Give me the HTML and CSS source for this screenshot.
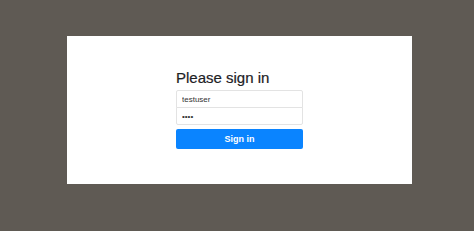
FILE: index.html
```html
<!DOCTYPE html>
<html lang="en">
<head>
    <meta charset="UTF-8">
    <title>Please sign in</title>
    <link rel="stylesheet" href="styles.css">
</head>
<body>
    <div class="panel">
        <form class="form-signin">
            <h2 class="form-heading">Please sign in</h2>
            <input type="text" class="form-input first" value="testuser">
            <input type="password" class="form-input last" value="test">
            <button type="button" class="btn-signin">Sign in</button>
        </form>
    </div>
</body>
</html>
```

FILE: styles.css
```css
* {
    margin: 0;
    padding: 0;
    box-sizing: border-box;
}

body {
    background-color: #5f5a54;
    font-family: 'Liberation Sans', Arial, sans-serif;
    padding: 36px 62px 0 67px;
}

.panel {
    background: #fff;
    width: 345px;
    height: 148px;
    display: flex;
    justify-content: center;
}

.form-signin {
    width: 127px;
    padding-top: 33px;
}

.form-heading {
    font-size: 15px;
    font-weight: 400;
    color: #1d2125;
    line-height: 18px;
    margin-bottom: 3px;
    -webkit-text-stroke: 0.2px #1d2125;
}

.form-input {
    display: block;
    width: 100%;
    height: 18px;
    border: 1px solid #e3e3e3;
    padding: 0 5px;
    font-family: inherit;
    font-size: 8px;
    color: #333;
    outline: none;
}

.form-input.first {
    border-radius: 2px 2px 0 0;
}

.form-input.last {
    border-radius: 0 0 2px 2px;
    margin-top: -1px;
}

.btn-signin {
    display: block;
    width: 100%;
    height: 20px;
    margin-top: 4px;
    border: none;
    border-radius: 2px;
    background: #0a84ff;
    color: #fff;
    font-family: inherit;
    font-size: 9px;
    font-weight: 700;
}
```
